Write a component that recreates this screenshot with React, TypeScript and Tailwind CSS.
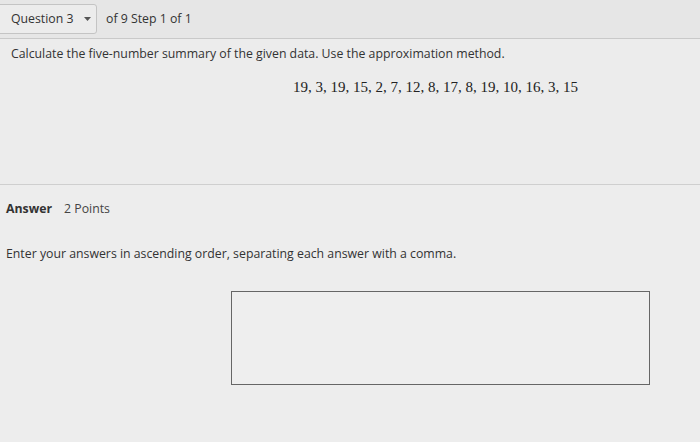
export default function App() {
  return (
    <div className="flex h-[442px] w-[700px] flex-col overflow-hidden bg-[#ebebeb] font-['Open_Sans',sans-serif] text-[#2e2e2e]">
      {/* top bar */}
      <div className="flex h-[39px] items-center border-b border-[#c9c9c9] bg-[#e6e6e6]">
        <button
          type="button"
          className="ml-[-1px] flex h-[30px] w-[98px] items-center gap-[10px] rounded-r-[3px] border border-[#c4c4c4] bg-[#ececec] pl-[11px] text-[12.3px] text-[#333]"
        >
          Question 3
          <svg width="7" height="4" viewBox="0 0 7 4">
            <path d="M0 0h7L3.5 4z" fill="#555" />
          </svg>
        </button>
        <span className="ml-[9px] text-[12.3px] text-[#333]">of 9 Step 1 of 1</span>
      </div>

      {/* question */}
      <div className="flex h-[146px] flex-col border-b border-[#cfcfcf] bg-[#ececec]">
        <p className="mt-[6px] ml-[11px] text-[12.3px] text-[#333]">
          Calculate the five-number summary of the given data. Use the approximation method.
        </p>
        <p className="mt-[13px] ml-[293px] font-['Liberation_Serif',serif] text-[15px] text-[#222]">
          19, 3, 19, 15, 2, 7, 12, 8, 17, 8, 19, 10, 16, 3, 15
        </p>
      </div>

      {/* answer */}
      <div className="flex flex-1 flex-col bg-[#ededed]">
        <div className="mt-[15px] ml-[6px] flex items-baseline gap-[12px] text-[12.3px]">
          <span className="font-bold text-[#333]">Answer</span>
          <span className="text-[#444]">2 Points</span>
        </div>
        <p className="mt-[27px] ml-[6px] text-[12.3px] text-[#333]">
          Enter your answers in ascending order, separating each answer with a comma.
        </p>
        <div className="mt-[27px] ml-[231px] h-[94px] w-[419px] border-[1.5px] border-[#666] bg-[#eeeeee]" />
      </div>
    </div>
  );
}
